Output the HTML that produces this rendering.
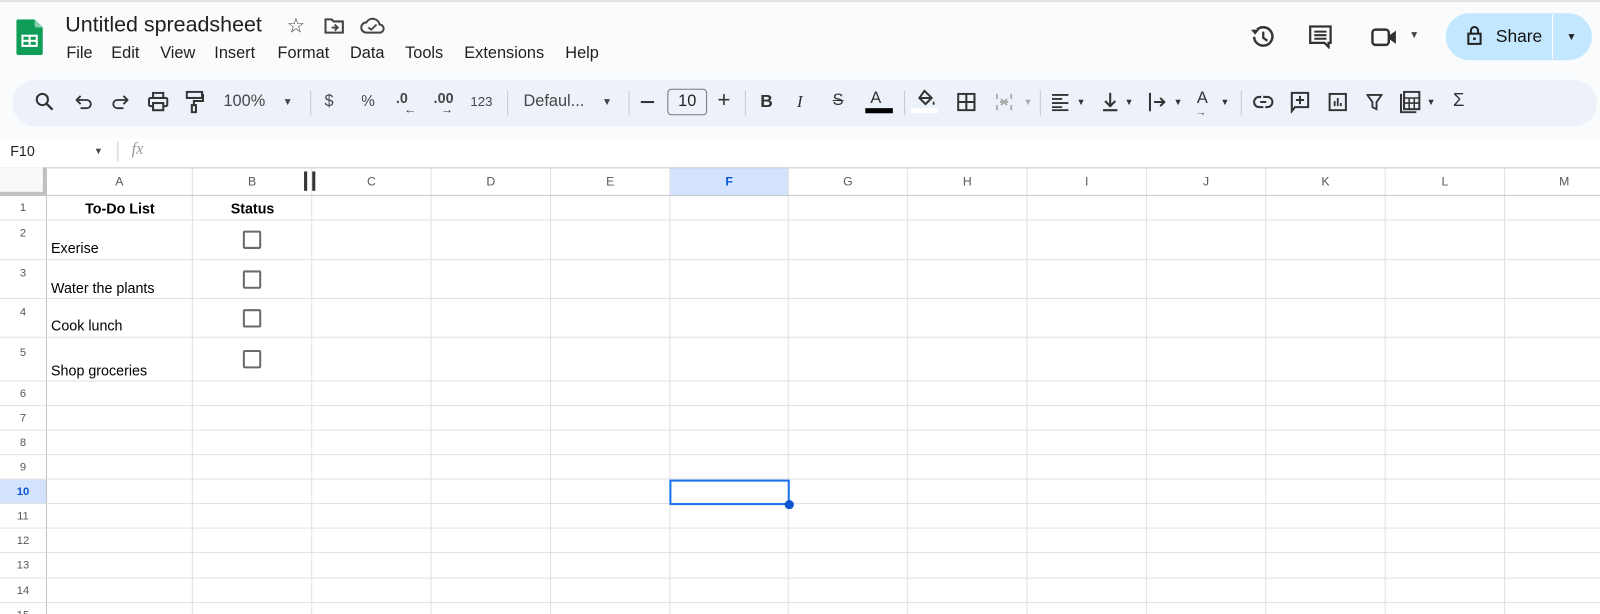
<!DOCTYPE html>
<html><head><meta charset="utf-8"><style>
*{margin:0;padding:0;box-sizing:border-box}
body{width:1600px;height:614px;overflow:hidden;background:#fff;font-family:"Liberation Sans",Arial,sans-serif;color:#202124}
#wrap{position:absolute;left:0;top:0;width:1568px;height:602px;transform:scale(1.0204);transform-origin:0 0;overflow:hidden}
.a{position:absolute}
#hdr{left:0;top:0;width:1568px;height:135px;background:#f9fbfd;border-top:2px solid #e3e3e3}
.title{left:64px;top:13px;font-size:21px;color:#1f1f1f}
.menu{top:44px;font-size:16px;color:#1f1f1f}
#tb{left:12px;top:78px;width:1553px;height:46px;background:#edf2fa;border-radius:23px}
.t{font-size:16px;color:#444746;top:91px}
.sep{width:1px;height:24px;background:#c7c7c7;top:89px}
.ic{position:absolute}
.gl{position:absolute;background:#e1e1e1}
.ch{position:absolute;top:164px;height:28px;font-size:12px;color:#575757;text-align:center;line-height:28px;border-right:1px solid #e1e1e1}
.rh{position:absolute;left:0;width:46px;font-size:11px;color:#575757;text-align:center;border-bottom:1px solid #e1e1e1;border-right:1px solid #c0c0c0}
.cb{position:absolute;left:238px;width:18px;height:18px;border:2px solid #6b6b6b;border-radius:2px}
.cell{position:absolute;left:50px;font-size:14px;color:#000}
</style></head><body><div id="wrap">
<div id="hdr" class="a"></div>
<svg class="ic" style="left:16px;top:19px" width="26" height="35" viewBox="0 0 26 35"><path d="M2 0h16l8 8v25a2 2 0 0 1-2 2H2a2 2 0 0 1-2-2V2a2 2 0 0 1 2-2z" fill="#0f9d58"/><path d="M18 0l8 8h-6a2 2 0 0 1-2-2z" fill="#87ceac"/><rect x="5" y="15" width="16" height="12" fill="#fff"/><rect x="7" y="17" width="5" height="3" fill="#0f9d58"/><rect x="14" y="17" width="5" height="3" fill="#0f9d58"/><rect x="7" y="22" width="5" height="3" fill="#0f9d58"/><rect x="14" y="22" width="5" height="3" fill="#0f9d58"/></svg>
<div class="a title">Untitled spreadsheet</div>
<div class="a" style="left:281px;top:13px;font-size:20px;color:#444">☆</div>
<svg class="ic" style="left:318px;top:17px" width="20" height="17" viewBox="0 0 20 17"><path d="M1 2h6l2 2h9v11H1z" fill="none" stroke="#444" stroke-width="2"/><path d="M7 10h6M10 7l3 3-3 3" fill="none" stroke="#444" stroke-width="1.8"/></svg>
<svg class="ic" style="left:353px;top:17px" width="24" height="17" viewBox="0 0 24 17"><path d="M6 15a5 5 0 0 1 0-10 7 7 0 0 1 13 2 4 4 0 0 1 0 8z" fill="none" stroke="#444" stroke-width="2"/><path d="M8 10l3 2 5-5" fill="none" stroke="#444" stroke-width="1.8"/></svg>
<div class="a menu" style="left:65px">File</div>
<div class="a menu" style="left:109px">Edit</div>
<div class="a menu" style="left:157px">View</div>
<div class="a menu" style="left:210px">Insert</div>
<div class="a menu" style="left:272px">Format</div>
<div class="a menu" style="left:343px">Data</div>
<div class="a menu" style="left:397px">Tools</div>
<div class="a menu" style="left:455px">Extensions</div>
<div class="a menu" style="left:554px">Help</div>
<svg class="ic" style="left:1225px;top:23px" width="26" height="26" viewBox="0 0 26 26"><path d="M4 13a9 9 0 1 0 3-7" fill="none" stroke="#333" stroke-width="2.4"/><path d="M1 6l4 5 4-5z" fill="#333"/><path d="M13 8v6l4 3" fill="none" stroke="#333" stroke-width="2.2"/></svg>
<svg class="ic" style="left:1282px;top:24px" width="25" height="24" viewBox="0 0 25 24"><path d="M2 2h20v16h-2v4l-4-4H2z" fill="none" stroke="#333" stroke-width="2.2"/><path d="M6 7h12M6 10.5h12M6 14h12" stroke="#333" stroke-width="2"/></svg>
<svg class="ic" style="left:1343px;top:25px" width="28" height="22" viewBox="0 0 28 22"><rect x="2" y="4" width="16" height="15" rx="3" fill="none" stroke="#333" stroke-width="2.4"/><path d="M18 10l7-5v13l-7-5z" fill="#333"/></svg>
<div class="a" style="left:1381px;top:29px;font-size:10px;color:#444">▼</div>
<div class="a" style="left:1417px;top:13px;width:143px;height:46px;background:#c2e7ff;border-radius:23px"></div>
<div class="a" style="left:1521px;top:14px;width:1px;height:44px;background:#fff"></div>
<svg class="ic" style="left:1437px;top:25px" width="16" height="20" viewBox="0 0 16 20"><rect x="2" y="8" width="12" height="10" fill="none" stroke="#222" stroke-width="2"/><path d="M4.5 8V5a3.5 3.5 0 0 1 7 0v3" fill="none" stroke="#222" stroke-width="2"/><circle cx="8" cy="13" r="1.4" fill="#222"/></svg>
<div class="a" style="left:1466px;top:26px;font-size:17px;color:#111">Share</div>
<div class="a" style="left:1535px;top:31px;font-size:10px;color:#222">▼</div>

<div id="tb" class="a"></div>
<svg class="ic" style="left:34px;top:90px" width="20" height="20" viewBox="0 0 20 20"><circle cx="7.5" cy="7.5" r="5.5" fill="none" stroke="#333" stroke-width="2"/><path d="M11.5 11.5l6 6" stroke="#333" stroke-width="2.2"/></svg>
<svg class="ic" style="left:74px;top:92px" width="18" height="16" viewBox="0 0 18 16"><path d="M5 2L1 6l4 4" fill="none" stroke="#333" stroke-width="1.8"/><path d="M1 6h10a4 4 0 0 1 0 8H5" fill="none" stroke="#333" stroke-width="1.8"/></svg>
<svg class="ic" style="left:108px;top:92px" width="18" height="16" viewBox="0 0 18 16"><path d="M13 2l4 4-4 4" fill="none" stroke="#333" stroke-width="1.8"/><path d="M17 6H7a4 4 0 0 0 0 8h6" fill="none" stroke="#333" stroke-width="1.8"/></svg>
<svg class="ic" style="left:145px;top:90px" width="20" height="20" viewBox="0 0 20 20"><rect x="5" y="1" width="10" height="5" fill="none" stroke="#333" stroke-width="2"/><rect x="1" y="6" width="18" height="8" rx="1.5" fill="none" stroke="#333" stroke-width="2"/><rect x="5" y="11" width="10" height="7" fill="#edf2fa" stroke="#333" stroke-width="2"/></svg>
<svg class="ic" style="left:182px;top:89px" width="18" height="22" viewBox="0 0 18 22"><rect x="1" y="1" width="15" height="6" fill="none" stroke="#333" stroke-width="2"/><path d="M16 4h1v6H8v4" fill="none" stroke="#333" stroke-width="2"/><rect x="6" y="14" width="4" height="7" fill="none" stroke="#333" stroke-width="2"/></svg>
<div class="a t" style="left:219px">100%</div>
<div class="a" style="left:277px;top:95px;font-size:10px;color:#444">▼</div>
<div class="a sep" style="left:304px"></div>
<div class="a t" style="left:318px">$</div>
<div class="a t" style="left:354px;font-size:15px">%</div>
<div class="a t" style="left:388px;font-size:14px;font-weight:bold;top:88px">.0</div>
<div class="a" style="left:396px;top:100px;font-size:12px;color:#333">←</div>
<div class="a t" style="left:425px;font-size:14px;font-weight:bold;top:88px">.00</div>
<div class="a" style="left:432px;top:100px;font-size:12px;color:#333">→</div>
<div class="a t" style="left:461px;font-size:13px;top:92px">123</div>
<div class="a sep" style="left:497px"></div>
<div class="a t" style="left:513px">Defaul...</div>
<div class="a" style="left:590px;top:95px;font-size:10px;color:#444">▼</div>
<div class="a sep" style="left:616px"></div>
<div class="a" style="left:628px;top:99px;width:13px;height:2px;background:#333"></div>
<div class="a" style="left:654px;top:87px;width:39px;height:26px;border:1px solid #747775;border-radius:4px;font-size:16px;text-align:center;line-height:24px;color:#222">10</div>
<div class="a" style="left:703px;top:85px;font-size:22px;color:#333">+</div>
<div class="a sep" style="left:730px"></div>
<div class="a" style="left:745px;top:90px;font-size:17px;font-weight:bold;color:#333">B</div>
<div class="a" style="left:781px;top:90px;font-size:17px;font-style:italic;font-family:'Liberation Serif',serif;color:#333">I</div>
<div class="a" style="left:816px;top:90px;font-size:16px;color:#333;text-decoration:line-through">S</div>
<div class="a" style="left:853px;top:88px;font-size:16px;color:#333">A</div>
<div class="a" style="left:848px;top:106px;width:27px;height:5px;background:#000"></div>
<div class="a sep" style="left:886px"></div>
<svg class="ic" style="left:898px;top:88px" width="20" height="18" viewBox="0 0 20 18"><path d="M8 1l7 7-6 6-6-6z" fill="none" stroke="#333" stroke-width="2"/><path d="M3 8h12" stroke="#333" stroke-width="2"/><path d="M17 11q2 3 0 4q-2-1 0-4z" fill="#333"/></svg>
<div class="a" style="left:893px;top:106px;width:26px;height:5px;background:#fff"></div>
<svg class="ic" style="left:938px;top:91px" width="18" height="18" viewBox="0 0 18 18"><rect x="1" y="1" width="16" height="16" fill="none" stroke="#333" stroke-width="2"/><path d="M9 1v16M1 9h16" stroke="#333" stroke-width="2"/></svg>
<svg class="ic" style="left:975px;top:91px" width="18" height="18" viewBox="0 0 18 18"><path d="M2 1v5M16 1v5M2 12v5M16 12v5M5 9h8M6 6l3 3-3 3M12 6L9 9l3 3" fill="none" stroke="#aaa" stroke-width="1.8"/></svg>
<div class="a" style="left:1003px;top:95px;font-size:9px;color:#aaa">▼</div>
<div class="a sep" style="left:1019px"></div>
<svg class="ic" style="left:1030px;top:91px" width="18" height="18" viewBox="0 0 18 18"><path d="M1 2h16M1 6h10M1 10h16M1 14h10M1 17h16" stroke="#333" stroke-width="1.8"/></svg>
<div class="a" style="left:1055px;top:95px;font-size:9px;color:#333">▼</div>
<svg class="ic" style="left:1080px;top:90px" width="16" height="20" viewBox="0 0 16 20"><path d="M8 1v13M3 9l5 5 5-5M1 18h14" fill="none" stroke="#333" stroke-width="2"/></svg>
<div class="a" style="left:1102px;top:95px;font-size:9px;color:#333">▼</div>
<svg class="ic" style="left:1125px;top:90px" width="18" height="20" viewBox="0 0 18 20"><path d="M2 1v18M6 10h10M12 6l4 4-4 4" fill="none" stroke="#333" stroke-width="2"/></svg>
<div class="a" style="left:1150px;top:95px;font-size:9px;color:#333">▼</div>
<div class="a" style="left:1173px;top:88px;font-size:16px;color:#333">A</div>
<div class="a" style="left:1172px;top:105px;font-size:10px;color:#333">→</div>
<div class="a" style="left:1196px;top:95px;font-size:9px;color:#333">▼</div>
<div class="a sep" style="left:1216px"></div>
<svg class="ic" style="left:1228px;top:93px" width="20" height="14" viewBox="0 0 20 14"><rect x="1" y="2" width="18" height="10" rx="5" fill="none" stroke="#333" stroke-width="2"/><path d="M7 7h6" stroke="#333" stroke-width="2"/><path d="M9 1v3M11 10v3" stroke="#edf2fa" stroke-width="2"/></svg>
<svg class="ic" style="left:1264px;top:89px" width="20" height="22" viewBox="0 0 20 22"><path d="M2 2h16v14H5l-3 4z" fill="none" stroke="#333" stroke-width="2"/><path d="M10 5v8M6 9h8" stroke="#333" stroke-width="2"/></svg>
<svg class="ic" style="left:1302px;top:91px" width="18" height="18" viewBox="0 0 18 18"><rect x="1" y="1" width="16" height="16" fill="none" stroke="#333" stroke-width="2"/><path d="M6 13V8M9 13V5M12 13v-3" stroke="#333" stroke-width="1.8"/></svg>
<svg class="ic" style="left:1339px;top:91px" width="16" height="18" viewBox="0 0 16 18"><path d="M1 2h14l-5 7v7l-4-2V9z" fill="none" stroke="#333" stroke-width="1.8"/></svg>
<svg class="ic" style="left:1372px;top:89px" width="20" height="22" viewBox="0 0 20 22"><path d="M1 3v18h15" fill="none" stroke="#333" stroke-width="2"/><rect x="4" y="1" width="15" height="17" fill="none" stroke="#333" stroke-width="2"/><path d="M4 7h15M9 7v11M14 7v11M4 12h15" stroke="#333" stroke-width="1.5"/></svg>
<div class="a" style="left:1398px;top:95px;font-size:9px;color:#333">▼</div>
<div class="a" style="left:1424px;top:88px;font-size:18px;color:#333">Σ</div>

<div class="a" style="left:10px;top:140px;font-size:14px;color:#222">F10</div>
<div class="a" style="left:92px;top:143px;font-size:9px;color:#444">▼</div>
<div class="a" style="left:115px;top:139px;width:1px;height:19px;background:#c7c7c7"></div>
<div class="a" style="left:129px;top:138px;font-size:16px;font-style:italic;font-family:'Liberation Serif',serif;color:#999">fx</div>

<div id="grid"></div>
<div class="a" style="left:0;top:164px;width:1568px;height:1px;background:#c7c7c7"></div>
<div class="a" style="left:0;top:164px;width:46px;height:28px;background:#f8f9fa;border-right:4px solid #c0c0c0;border-bottom:4px solid #c0c0c0"></div>
<div class="a" style="left:298px;top:168px;width:3px;height:19px;background:#333"></div>
<div class="a" style="left:306px;top:168px;width:3px;height:19px;background:#333"></div>

<div class="a" style="left:46px;top:192px;width:143px;height:24px;text-align:center;line-height:24px;font-size:14px;font-weight:bold;color:#000">To-Do List</div>
<div class="a" style="left:189px;top:192px;width:117px;height:24px;text-align:center;line-height:24px;font-size:14px;font-weight:bold;color:#000">Status</div>
<div class="cell" style="top:235px">Exerise</div>
<div class="cell" style="top:274px">Water the plants</div>
<div class="cell" style="top:311px">Cook lunch</div>
<div class="cell" style="top:355px">Shop groceries</div>
<div class="cb" style="top:226px"></div>
<div class="cb" style="top:265px"></div>
<div class="cb" style="top:303px"></div>
<div class="cb" style="top:343px"></div>

<div class="a" style="left:656px;top:470px;width:118px;height:25px;border:2px solid #1a73e8"></div>
<div class="a" style="left:769px;top:490px;width:9px;height:9px;border-radius:50%;background:#0b57d0"></div>
</div>
<script>
var cols=[46,189,306,423,540,657,773,890,1007,1124,1241,1358,1475,1592],L="ABCDEFGHIJKLM";
var rows=[192,216,255,293,331,374,398,422,446,470,494,518,542,567,591,615];
var h='';
for(var i=0;i<13;i++){var x=cols[i],w=cols[i+1]-x;var sel=i==5;
h+='<div class="ch" style="left:'+x+'px;width:'+w+'px;'+(sel?'background:#d3e3fd;color:#0b57d0;font-weight:bold;':'')+'">'+L[i]+'</div>';
h+='<div class="gl" style="left:'+(cols[i+1]-1)+'px;top:192px;width:1px;height:422px"></div>';}
for(var r=0;r<15;r++){var y=rows[r],hh=rows[r+1]-y;var sel=r==9;
h+='<div class="rh" style="top:'+y+'px;height:'+hh+'px;line-height:'+(r>=1&&r<=4?hh-12:hh)+'px;'+(sel?'background:#d3e3fd;color:#0b57d0;font-weight:bold;':'')+'">'+(r+1)+'</div>';
h+='<div class="gl" style="left:46px;top:'+(rows[r+1]-1)+'px;width:1554px;height:1px"></div>';}
h+='<div class="gl" style="left:0;top:191px;width:1568px;height:1px;background:#c7c7c7"></div>';
document.getElementById('grid').innerHTML=h;
</script>
</body></html>
